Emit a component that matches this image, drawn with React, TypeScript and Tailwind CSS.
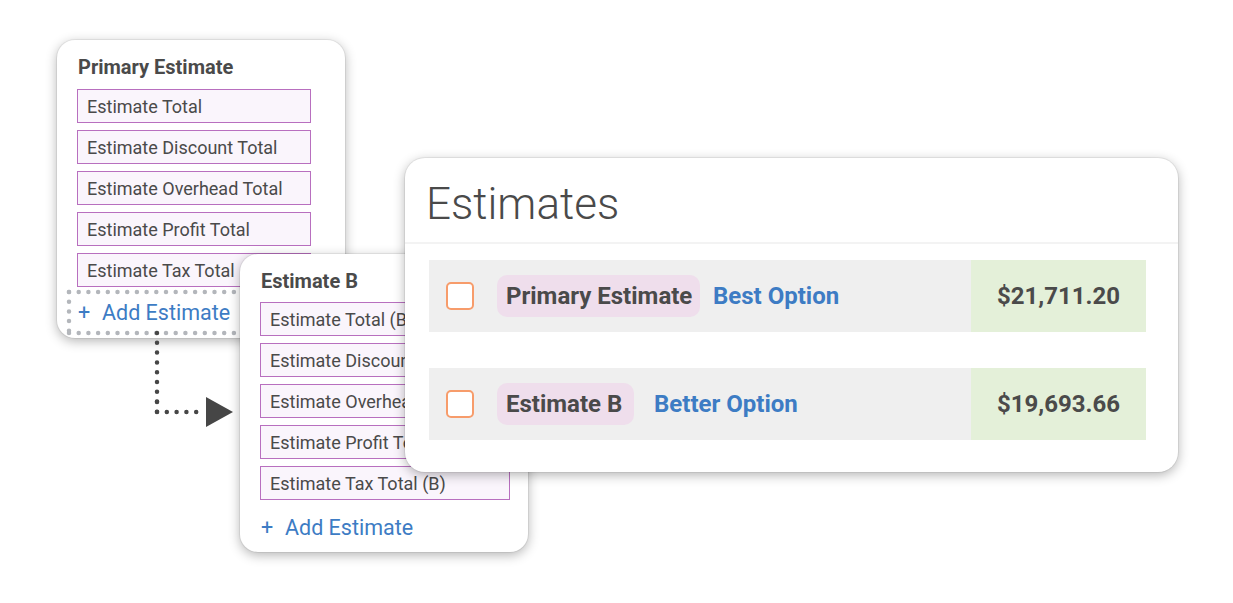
import React from 'react';

const FIELDS = [
  'Estimate Total',
  'Estimate Discount Total',
  'Estimate Overhead Total',
  'Estimate Profit Total',
  'Estimate Tax Total',
];

const OPTIONS = [
  { name: 'Primary Estimate', label: 'Best Option', price: '$21,711.20', pill: 'w-[203px]', gap: 'ml-[13px]' },
  { name: 'Estimate B', label: 'Better Option', price: '$19,693.66', pill: 'w-[137px]', gap: 'ml-[20px]' },
];

const cardShadow = 'shadow-[0_0_0_1px_rgba(0,0,0,0.06),0_3px_12px_rgba(0,0,0,0.3)]';

const FieldBox = ({ text, width }: { text: string; width: string }) => (
  <div className={`${width} h-[34px] flex items-center pl-[9px] border-[1.5px] border-[#b86fbf] bg-[#faf5fc] text-[18px] text-[#4a4a4a] whitespace-nowrap overflow-hidden`}>
    {text}
  </div>
);

const AddEstimate = () => (
  <div className="flex items-center h-[28px] text-[21.5px] text-[#3d7cc4]">
    <span className="w-[24px]">+</span>
    <span>Add Estimate</span>
  </div>
);

// dotted outline round the first "Add Estimate" and the connector down to Estimate B
const Connector = () => (
  <svg className="absolute left-0 top-0" width="260" height="440" viewBox="0 0 260 440" fill="none">
    <g stroke="#b3b6bb" strokeWidth="4.5" strokeLinecap="round" strokeDasharray="0 9.7">
      <path d="M69 292 H245" />
      <path d="M69 333 H245" />
      <path d="M69 292 V333" />
    </g>
    <path d="M157 333 V402 M157 412 H200" stroke="#464646" strokeWidth="4.5" strokeLinecap="round" strokeDasharray="0 9.8" />
    <path d="M157 402 V412" stroke="#464646" strokeWidth="4.5" strokeLinecap="round" strokeDasharray="0 9.8" />
    <path d="M206 397 L233 412 L206 427 Z" fill="#464646" />
  </svg>
);

export default function App() {
  return (
    <div className="relative w-[1233px] h-[603px] bg-white overflow-hidden font-['Roboto',sans-serif]">
      {/* Primary estimate fields */}
      <div className={`absolute left-[57px] top-[40px] w-[288px] h-[298px] rounded-[18px] bg-white ${cardShadow}`}>
        <div className="pl-[20px] pt-[15px] flex flex-col">
          <h3 className="text-[20px] leading-[24px] font-bold text-[#4a4a4a] ml-[1px]">Primary Estimate</h3>
          <div className="mt-[10px] flex flex-col gap-[7px]">
            {FIELDS.map((f) => (
              <FieldBox key={f} text={f} width="w-[234px]" />
            ))}
          </div>
        </div>
      </div>

      <Connector />
      <div className="absolute left-[78px] top-[299px]">
        <AddEstimate />
      </div>

      {/* Estimate B fields */}
      <div className={`absolute left-[240px] top-[254px] w-[288px] h-[298px] rounded-[18px] bg-white ${cardShadow}`}>
        <div className="pl-[20px] pt-[15px] flex flex-col">
          <h3 className="text-[20px] leading-[24px] font-bold text-[#4a4a4a] ml-[1px]">Estimate B</h3>
          <div className="mt-[9px] flex flex-col gap-[7px]">
            {FIELDS.map((f) => (
              <FieldBox key={f} text={`${f} (B)`} width="w-[250px]" />
            ))}
          </div>
          <div className="mt-[14px] ml-[1px]">
            <AddEstimate />
          </div>
        </div>
      </div>

      {/* Estimates summary */}
      <div className={`absolute left-[405px] top-[158px] w-[773px] h-[314px] rounded-[20px] bg-white ${cardShadow}`}>
        <div className="h-[86px] pl-[21px] pt-[20px] border-b-2 border-[#f3f3f3]">
          <h1 className="text-[44px] leading-[52px] font-light text-[#4a4a4a]">Estimates</h1>
        </div>
        <div className="pl-[24px] pt-[16px] flex flex-col gap-[36px]">
          {OPTIONS.map((o) => (
            <div key={o.name} className="w-[717px] h-[72px] flex bg-[#efefef]">
              <div className="flex-1 flex items-center pl-[17px]">
                <div className="w-[28px] h-[28px] rounded-[5px] border-2 border-[#f79c6b] bg-white" />
                <div className={`ml-[23px] ${o.pill} h-[42px] flex items-center rounded-[10px] bg-[#efdeec] pl-[9px] text-[24px] font-bold text-[#4a4a4a] whitespace-nowrap`}>
                  {o.name}
                </div>
                <span className={`${o.gap} text-[24px] font-bold text-[#3d7cc4]`}>{o.label}</span>
              </div>
              <div className="w-[175px] flex items-center justify-center bg-[#e4f0d9] text-[24px] font-bold text-[#4a4a4a]">
                {o.price}
              </div>
            </div>
          ))}
        </div>
      </div>
    </div>
  );
}
